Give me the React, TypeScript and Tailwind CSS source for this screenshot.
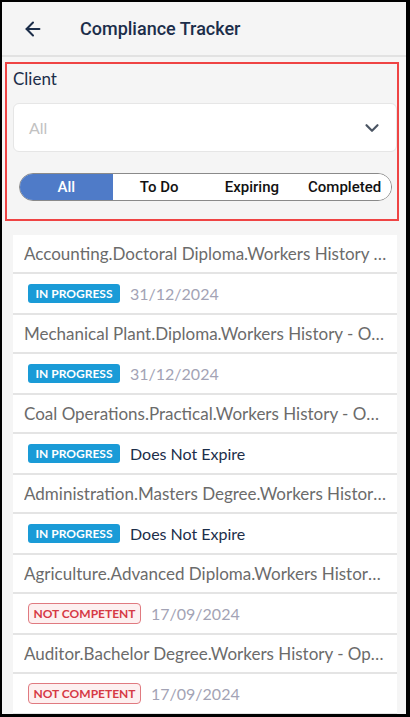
import React from 'react'
import { ArrowLeft, ChevronDown } from 'lucide-react'

type Item = {
  title: string
  status: 'progress' | 'failed'
  expiry: string
}

const items: Item[] = [
  { title: 'Accounting.Doctoral Diploma.Workers History - Optional', status: 'progress', expiry: '31/12/2024' },
  { title: 'Mechanical Plant.Diploma.Workers History - Optional', status: 'progress', expiry: '31/12/2024' },
  { title: 'Coal Operations.Practical.Workers History - Optional', status: 'progress', expiry: 'Does Not Expire' },
  { title: 'Administration.Masters Degree.Workers History - Optional', status: 'progress', expiry: 'Does Not Expire' },
  { title: 'Agriculture.Advanced Diploma.Workers History - Optional', status: 'failed', expiry: '17/09/2024' },
  { title: 'Auditor.Bachelor Degree.Workers History - Optional', status: 'failed', expiry: '17/09/2024' }
]

const tabs = ['All', 'To Do', 'Expiring', 'Completed']

const StatusBadge: React.FC<{ status: Item['status'] }> = ({ status }) =>
  status === 'progress' ? (
    <span className="inline-flex h-[19px] w-[92px] items-center justify-center rounded-[3px] bg-[#1a9bd7] text-[12px] font-bold text-white">
      IN PROGRESS
    </span>
  ) : (
    <span className="inline-flex h-[21px] w-[113px] items-center justify-center rounded-[4px] border border-[#e07a80] bg-[#fdf0f0] text-[12px] font-bold text-[#d63a45]">
      NOT COMPETENT
    </span>
  )

export default function App() {
  return (
    <div className="h-[717px] w-[410px] overflow-hidden border-t-2 border-r-4 border-b-[3px] border-l-2 border-black bg-[#f5f5f5] font-['Lato',sans-serif]">
      {/* Header */}
      <div className="flex h-[55px] items-center border-b-2 border-[#e2e2e2] font-['Roboto',sans-serif]">
        <ArrowLeft className="ml-[20px] text-[#1c2e4a]" size={22} strokeWidth={2.2} />
        <h1 className="ml-[36px] text-[18px] font-medium text-[#1c2e4a]">Compliance Tracker</h1>
      </div>

      {/* Filters */}
      <div className="mt-[5px] ml-[3px] h-[159px] w-[394px] border-2 border-[#ef4444] pt-[4px]">
        <div className="ml-[6px] text-[17px] leading-[22px] text-[#1c2e4a]">Client</div>
        <div className="mt-[13px] ml-[6px] flex h-[49px] w-[384px] items-center justify-between rounded-[6px] border border-[#e6e6e6] bg-white pr-[13px] pl-[15px]">
          <span className="text-[16px] text-[#c2c2c2]">All</span>
          <ChevronDown className="text-[#4b5563]" size={22} strokeWidth={2.4} />
        </div>
        <div className="mt-[21px] ml-[12px] flex h-[28px] w-[373px] overflow-hidden rounded-full border border-[#8a8a8a] font-['Roboto',sans-serif]">
          {tabs.map((tab, i) => (
            <div
              key={tab}
              className={
                i === 0
                  ? 'flex flex-1 items-center justify-center bg-[#4f7bc8] text-[15px] font-medium text-white'
                  : 'flex flex-1 items-center justify-center bg-white text-[15px] font-medium text-[#111]'
              }
            >
              {tab}
            </div>
          ))}
        </div>
      </div>

      {/* List */}
      <div className="mt-[14px] mr-[9px] ml-[11px] bg-white">
        {items.map((item, index) => (
          <div key={index}>
            <div className="flex h-[39px] items-center border-b-2 border-[#e4e4e4] pr-[9px] pl-[11px]">
              <span className="truncate text-[17px] text-[#6b6b6b]">{item.title}</span>
            </div>
            <div className="flex h-[41px] items-center gap-[10px] border-b-2 border-[#e4e4e4] pl-[15px]">
              <StatusBadge status={item.status} />
              <span
                className={
                  item.expiry === 'Does Not Expire'
                    ? 'text-[16px] text-[#1c2e4a]'
                    : 'text-[16px] text-[#a3a3b5]'
                }
              >
                {item.expiry}
              </span>
            </div>
          </div>
        ))}
      </div>
    </div>
  )
}
